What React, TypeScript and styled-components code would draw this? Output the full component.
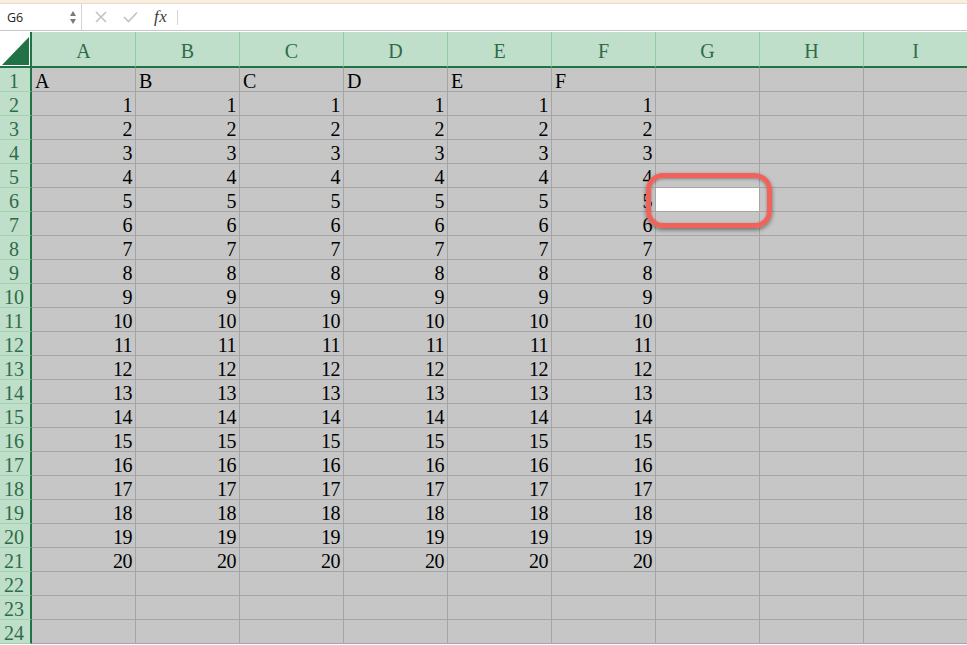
import React from "react";
import styled, { createGlobalStyle } from "styled-components";

const COLS = ["A", "B", "C", "D", "E", "F", "G", "H", "I"];
const ROWS = 24;
const DATA_COLS = 6;
const SELECTED = { row: 6, col: 7 };

const GlobalStyle = createGlobalStyle`
  html, body {
    margin: 0;
    padding: 0;
    background: #ffffff;
    overflow: hidden;
  }
  * { box-sizing: border-box; }
`;

const Page = styled.div`
  width: 967px;
  height: 645px;
  overflow: hidden;
  display: flex;
  flex-direction: column;
  background: #ffffff;
`;

const TopStrip = styled.div`
  height: 4px;
  background: #f8eedf;
  border-bottom: 1px solid #e9dcc8;
`;

const FormulaBar = styled.div`
  height: 27px;
  display: flex;
  align-items: center;
  background: #ffffff;
  border-bottom: 1px solid #c6c6c6;
`;

const NameBox = styled.div`
  width: 82px;
  height: 100%;
  display: flex;
  align-items: center;
  justify-content: space-between;
  padding: 0 6px 0 7px;
  font-family: "Open Sans", "Noto Sans", sans-serif;
  font-size: 12.5px;
  color: #222;
  border-right: 1px solid #d4d4d4;
`;

const Spinner = styled.div`
  display: flex;
  flex-direction: column;
  gap: 3px;
  margin-right: -1px;
`;

const Tri = styled.div<{ $down?: boolean }>`
  width: 0;
  height: 0;
  border-left: 3.5px solid transparent;
  border-right: 3.5px solid transparent;
  ${(p) =>
    p.$down
      ? "border-top: 5px solid #7a7a7a;"
      : "border-bottom: 5px solid #7a7a7a;"}
`;

const Tools = styled.div`
  display: flex;
  align-items: center;
  gap: 16px;
  padding-left: 13px;
  height: 100%;
`;

const Fx = styled.span`
  font-family: "Liberation Serif", serif;
  font-style: italic;
  font-size: 17px;
  color: #3c3c3c;
  letter-spacing: 0.5px;
`;

const Divider = styled.div`
  width: 1px;
  height: 15px;
  background: #d4d4d4;
  margin-left: -6px;
`;

const Spacer = styled.div`
  height: 1px;
  background: #ffffff;
`;

const SheetWrap = styled.div`
  position: relative;
  flex: 1;
`;

const Sheet = styled.div`
  display: grid;
  grid-template-columns: 32px repeat(9, 104px);
  grid-template-rows: 36px repeat(${ROWS}, 24px);
  font-family: "Liberation Serif", "Times New Roman", serif;
  font-size: 20px;
`;

const Corner = styled.div`
  background: #ffffff;
  border-bottom: 2px solid #217346;
  border-right: 2px solid #217346;
  display: flex;
  align-items: flex-end;
  justify-content: flex-end;
  padding: 0 1px 1px 0;
`;

const ColHead = styled.div<{ $last?: boolean }>`
  background: #bfdfca;
  border-bottom: 2px solid #217346;
  border-right: 1px solid ${(p) => (p.$last ? "#bfdfca" : "#8fcc9f")};
  color: #2f6b49;
  display: flex;
  align-items: center;
  justify-content: center;
  padding-top: 4px;
`;

const RowHead = styled.div`
  background: #bfdfca;
  border-right: 2px solid #217346;
  border-bottom: 1px solid #9fd2ae;
  color: #2f6b49;
  text-align: center;
  line-height: 22px;
  padding: 2px 2px 0 0;
  overflow: hidden;
`;

const Cell = styled.div<{ $align: "left" | "right"; $active?: boolean }>`
  background: ${(p) => (p.$active ? "#ffffff" : "#c6c6c6")};
  border-right: 1px solid #a5a5a5;
  border-bottom: 1px solid #a5a5a5;
  color: #000;
  line-height: 22px;
  text-align: ${(p) => p.$align};
  padding: 2px 3px 0 3px;
  letter-spacing: ${(p) => (p.$align === "right" ? "-0.5px" : "0")};
  white-space: nowrap;
  overflow: hidden;
`;

const Highlight = styled.div`
  position: absolute;
  left: 646px;
  top: 141px;
  width: 126px;
  height: 55px;
  border: 5px solid #f0625a;
  border-radius: 17px;
  box-shadow: 0 2px 4px rgba(0, 0, 0, 0.45), inset 0 1px 3px rgba(0, 0, 0, 0.35);
  pointer-events: none;
`;

const cellValue = (row: number, col: number) => {
  if (col > DATA_COLS) return "";
  if (row === 1) return COLS[col - 1];
  if (row <= 21) return String(row - 1);
  return "";
};

const App = () => {
  return (
    <Page>
      <GlobalStyle />
      <TopStrip />
      <FormulaBar>
        <NameBox>
          <span>G6</span>
          <Spinner>
            <Tri />
            <Tri $down />
          </Spinner>
        </NameBox>
        <Tools>
          <svg width="12" height="12" viewBox="0 0 12 12">
            <path d="M1 1 L11 11 M11 1 L1 11" stroke="#c2c2c2" strokeWidth="1.6" />
          </svg>
          <svg width="15" height="12" viewBox="0 0 15 12">
            <path d="M1 6 L5.5 10.5 L14 1.5" stroke="#c2c2c2" strokeWidth="1.6" fill="none" />
          </svg>
          <Fx>fx</Fx>
          <Divider />
        </Tools>
      </FormulaBar>
      <Spacer />
      <SheetWrap>
        <Sheet>
          <Corner>
            <svg width="27" height="28" viewBox="0 0 27 28">
              <polygon points="0,28 27,28 27,0" fill="#217346" />
            </svg>
          </Corner>
          {COLS.map((c, i) => (
            <ColHead key={c} $last={i === COLS.length - 1}>
              {c}
            </ColHead>
          ))}
          {Array.from({ length: ROWS }, (_, r) => {
            const row = r + 1;
            return (
              <React.Fragment key={row}>
                <RowHead>{row}</RowHead>
                {COLS.map((c, ci) => {
                  const col = ci + 1;
                  return (
                    <Cell
                      key={c}
                      $align={row === 1 ? "left" : "right"}
                      $active={row === SELECTED.row && col === SELECTED.col}
                    >
                      {cellValue(row, col)}
                    </Cell>
                  );
                })}
              </React.Fragment>
            );
          })}
        </Sheet>
        <Highlight />
      </SheetWrap>
    </Page>
  );
};

export default App;
